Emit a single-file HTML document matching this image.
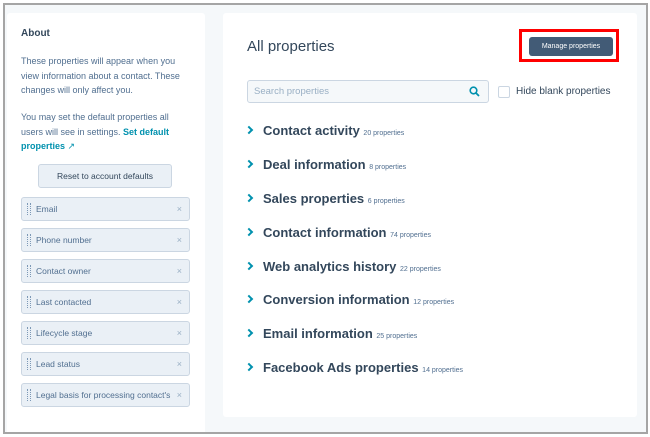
<!DOCTYPE html>
<html><head><style>
*{margin:0;padding:0;box-sizing:border-box}
body{width:650px;height:437px;background:#fff;font-family:"Liberation Sans",sans-serif;position:relative;overflow:hidden}
.frame{position:absolute;left:3px;top:3px;width:645px;height:431px;border:2px solid #a5a5a5;background:#f5f8fa;overflow:hidden}
.left{position:absolute;left:7px;top:13px;width:198px;height:419px;background:#fff;border-radius:3px 3px 0 0}
.a{position:absolute;color:#33475b}
.p{font-size:9px;line-height:14.5px;color:#516f90;left:21px;width:168px}
.item{position:absolute;left:21px;width:169px;height:24px;background:#eaf0f6;border:1px solid #cbd6e2;border-radius:3px;font-size:8.5px;color:#516f90;line-height:22px;padding-left:14px}
.item:before{content:"";position:absolute;left:5px;top:5px;width:2px;height:12px;border-left:1px dotted #7c98b6;border-right:1px dotted #7c98b6}
.item span{position:absolute;right:7px;top:0;color:#99afc4;font-size:9px}
.card{position:absolute;left:223px;top:13px;width:414px;height:404px;background:#fff;border-radius:3px}
.sec{position:absolute;left:263px;font-size:13px;font-weight:bold;color:#33475b}
.sec small{font-size:7px;font-weight:normal;color:#516f90}
.chev{position:absolute;left:246px;width:6px;height:6px;border-right:2px solid #0091ae;border-top:2px solid #0091ae;transform:rotate(45deg)}
</style></head><body>
<div class="frame"></div>
<div class="left"></div>
<div class="a" style="left:21px;top:28px;font-size:10px;font-weight:bold">About</div>
<div class="a p" style="top:54px">These properties will appear when you view information about a contact. These changes will only affect you.</div>
<div class="a p" style="top:110px">You may set the default properties all users will see in settings. <b style="color:#0091ae">Set default properties</b> <span style="color:#0091ae">↗</span></div>
<div class="a" style="left:38px;top:164px;width:134px;height:24px;background:#eaf0f6;border:1px solid #cbd6e2;border-radius:3px;font-size:8.5px;text-align:center;line-height:22px;color:#33475b">Reset to account defaults</div>
<div class="item" style="top:197px">Email<span>×</span></div>
<div class="item" style="top:228px">Phone number<span>×</span></div>
<div class="item" style="top:259px">Contact owner<span>×</span></div>
<div class="item" style="top:290px">Last contacted<span>×</span></div>
<div class="item" style="top:321px">Lifecycle stage<span>×</span></div>
<div class="item" style="top:352px">Lead status<span>×</span></div>
<div class="item" style="top:383px;white-space:nowrap;overflow:hidden">Legal basis for processing contact's<span>×</span></div>
<div class="card"></div>
<div class="a" style="left:247px;top:38px;font-size:15px;color:#33475b">All properties</div>
<div style="position:absolute;left:519px;top:29px;width:100px;height:33px;border:3px solid #f00"></div>
<div style="position:absolute;left:529px;top:37px;width:84px;height:19px;background:#425b76;border-radius:3px;color:#fff;font-size:7px;text-align:center;line-height:19px">Manage properties</div>
<div style="position:absolute;left:247px;top:80px;width:242px;height:23px;background:#f5f8fa;border:1px solid #cbd6e2;border-radius:3px;font-size:9.5px;color:#99afc4;line-height:21px;padding-left:6px">Search properties
<svg style="position:absolute;right:8px;top:5px" width="11" height="11" viewBox="0 0 11 11"><circle cx="4.5" cy="4.5" r="3.3" fill="none" stroke="#0091ae" stroke-width="1.6"/><path d="M7 7L10 10" stroke="#0091ae" stroke-width="1.8"/></svg></div>
<div style="position:absolute;left:498px;top:86px;width:12px;height:12px;border:1px solid #cbd6e2;border-radius:2px;background:#fff"></div>
<div class="a" style="left:516px;top:86px;font-size:10px;color:#33475b">Hide blank properties</div>
<div class="chev" style="top:127px"></div><div class="sec" style="top:123px">Contact activity <small>20 properties</small></div>
<div class="chev" style="top:161px"></div><div class="sec" style="top:157px">Deal information <small>8 properties</small></div>
<div class="chev" style="top:195px"></div><div class="sec" style="top:191px">Sales properties <small>6 properties</small></div>
<div class="chev" style="top:229px"></div><div class="sec" style="top:225px">Contact information <small>74 properties</small></div>
<div class="chev" style="top:263px"></div><div class="sec" style="top:259px">Web analytics history <small>22 properties</small></div>
<div class="chev" style="top:296px"></div><div class="sec" style="top:292px">Conversion information <small>12 properties</small></div>
<div class="chev" style="top:330px"></div><div class="sec" style="top:326px">Email information <small>25 properties</small></div>
<div class="chev" style="top:364px"></div><div class="sec" style="top:360px">Facebook Ads properties <small>14 properties</small></div>
</body></html>
